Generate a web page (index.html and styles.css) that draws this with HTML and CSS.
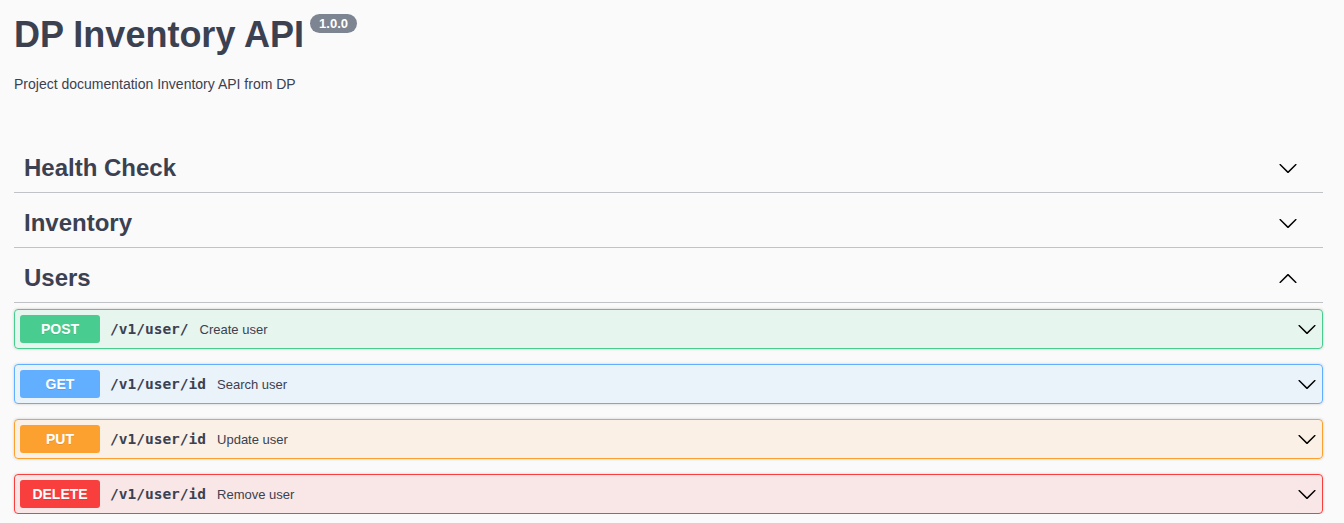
FILE: index.html
```html
<!DOCTYPE html>
<html lang="en">
<head>
<meta charset="utf-8">
<title>DP Inventory API</title>
<link rel="stylesheet" href="styles.css">
</head>
<body>
<div class="wrapper">
  <div class="info">
    <div class="title-row">
      <h2 class="title">DP Inventory API</h2>
      <span class="version">1.0.0</span>
    </div>
    <p class="description">Project documentation Inventory API from DP</p>
  </div>

  <section class="tag">
    <h3 class="tag-header">
      <span class="tag-name">Health Check</span>
      <svg class="tag-arrow" width="20" height="20" viewBox="0 0 20 20"><path d="M17.418 6.109c.272-.268.709-.268.979 0s.271.701 0 .969l-7.908 7.83c-.27.268-.707.268-.979 0l-7.908-7.830c-.27-.268-.27-.701 0-.969.271-.268.709-.268.979 0L10 13.25l7.418-7.141z"/></svg>
    </h3>
  </section>

  <section class="tag">
    <h3 class="tag-header">
      <span class="tag-name">Inventory</span>
      <svg class="tag-arrow" width="20" height="20" viewBox="0 0 20 20"><path d="M17.418 6.109c.272-.268.709-.268.979 0s.271.701 0 .969l-7.908 7.83c-.27.268-.707.268-.979 0l-7.908-7.83c-.27-.268-.27-.701 0-.969.271-.268.709-.268.979 0L10 13.25l7.418-7.141z"/></svg>
    </h3>
  </section>

  <section class="tag">
    <h3 class="tag-header">
      <span class="tag-name">Users</span>
      <svg class="tag-arrow" width="20" height="20" viewBox="0 0 20 20"><path d="M17.418 14.908c.272.268.709.268.979 0s.271-.701 0-.969l-7.908-7.83c-.27-.268-.707-.268-.979 0l-7.908 7.83c-.27.268-.27.701 0 .969.271.268.709.268.979 0L10 7.767l7.418 7.141z"/></svg>
    </h3>
    <div class="operations">
      <div class="opblock opblock-post">
        <div class="summary">
          <span class="method">POST</span>
          <span class="path">/v1/user/</span>
          <span class="summary-desc">Create user</span>
          <svg class="op-arrow" width="20" height="20" viewBox="0 0 20 20"><path d="M17.418 6.109c.272-.268.709-.268.979 0s.271.701 0 .969l-7.908 7.83c-.27.268-.707.268-.979 0l-7.908-7.83c-.27-.268-.27-.701 0-.969.271-.268.709-.268.979 0L10 13.25l7.418-7.141z"/></svg>
        </div>
      </div>
      <div class="opblock opblock-get">
        <div class="summary">
          <span class="method">GET</span>
          <span class="path">/v1/user/id</span>
          <span class="summary-desc">Search user</span>
          <svg class="op-arrow" width="20" height="20" viewBox="0 0 20 20"><path d="M17.418 6.109c.272-.268.709-.268.979 0s.271.701 0 .969l-7.908 7.83c-.27.268-.707.268-.979 0l-7.908-7.83c-.27-.268-.27-.701 0-.969.271-.268.709-.268.979 0L10 13.25l7.418-7.141z"/></svg>
        </div>
      </div>
      <div class="opblock opblock-put">
        <div class="summary">
          <span class="method">PUT</span>
          <span class="path">/v1/user/id</span>
          <span class="summary-desc">Update user</span>
          <svg class="op-arrow" width="20" height="20" viewBox="0 0 20 20"><path d="M17.418 6.109c.272-.268.709-.268.979 0s.271.701 0 .969l-7.908 7.83c-.27.268-.707.268-.979 0l-7.908-7.83c-.27-.268-.27-.701 0-.969.271-.268.709-.268.979 0L10 13.25l7.418-7.141z"/></svg>
        </div>
      </div>
      <div class="opblock opblock-delete">
        <div class="summary">
          <span class="method">DELETE</span>
          <span class="path">/v1/user/id</span>
          <span class="summary-desc">Remove user</span>
          <svg class="op-arrow" width="20" height="20" viewBox="0 0 20 20"><path d="M17.418 6.109c.272-.268.709-.268.979 0s.271.701 0 .969l-7.908 7.83c-.27.268-.707.268-.979 0l-7.908-7.83c-.27-.268-.27-.701 0-.969.271-.268.709-.268.979 0L10 13.25l7.418-7.141z"/></svg>
        </div>
      </div>
    </div>
  </section>
</div>
</body>
</html>
```

FILE: styles.css
```css
html, body {
  margin: 0;
  padding: 0;
  background: #fafafa;
  overflow: hidden;
}

body {
  font-family: "Liberation Sans", Arial, sans-serif;
  color: #3b4151;
}

.wrapper {
  padding: 13px 21px 0 14px;
}

.info {
  margin: 0 0 49px;
}

.title-row {
  display: flex;
  align-items: flex-start;
}

.title {
  margin: 0;
  font-size: 36px;
  line-height: 43px;
  font-weight: 700;
  color: #3b4151;
}

.version {
  margin: 1px 0 0 6px;
  padding: 2px 9px;
  background: #7d8492;
  color: #fff;
  font-size: 13px;
  line-height: 15px;
  font-weight: 700;
  border-radius: 57px;
}

.description {
  margin: 18px 0 0;
  font-size: 14px;
  line-height: 20px;
  color: #3b4151;
}

.tag-header {
  display: flex;
  align-items: center;
  margin: 0 0 5px;
  padding: 10px 25px 10px 10px;
  border-bottom: 1px solid rgba(59, 65, 81, .3);
  font-size: 24px;
  line-height: 29px;
  font-weight: 700;
  color: #3b4151;
}

.tag-name {
  flex: 1;
}

.tag-arrow {
  fill: #000;
  flex: none;
}

.operations {
  padding-top: 1px;
}

.opblock {
  margin: 0 0 15px;
  border: 1px solid;
  border-radius: 4px;
  box-shadow: 0 0 3px rgba(0, 0, 0, .19);
}

.opblock:last-child {
  margin-bottom: 0;
}

.summary {
  display: flex;
  align-items: center;
  padding: 5px;
}

.method {
  min-width: 80px;
  padding: 6px 0;
  font-size: 14px;
  line-height: 16px;
  font-weight: 700;
  text-align: center;
  color: #fff;
  border-radius: 3px;
  text-shadow: 0 1px 0 rgba(0, 0, 0, .1);
}

.path {
  padding: 0 10px;
  font-family: "DejaVu Sans Mono", "Liberation Mono", monospace;
  font-size: 14.5px;
  font-weight: 700;
  color: #3b4151;
}

.summary-desc {
  flex: 1;
  padding-left: 1px;
  font-size: 13px;
  color: #3b4151;
}

.op-arrow {
  fill: #000;
  flex: none;
}

.opblock-post {
  border-color: #49cc90;
  background: rgba(73, 204, 144, .1);
}
.opblock-post .method { background: #49cc90; }

.opblock-get {
  border-color: #61affe;
  background: rgba(97, 175, 254, .1);
}
.opblock-get .method { background: #61affe; }

.opblock-put {
  border-color: #fca130;
  background: rgba(252, 161, 48, .1);
}
.opblock-put .method { background: #fca130; }

.opblock-delete {
  border-color: #f93e3e;
  background: rgba(249, 62, 62, .1);
}
.opblock-delete .method { background: #f93e3e; }
```
